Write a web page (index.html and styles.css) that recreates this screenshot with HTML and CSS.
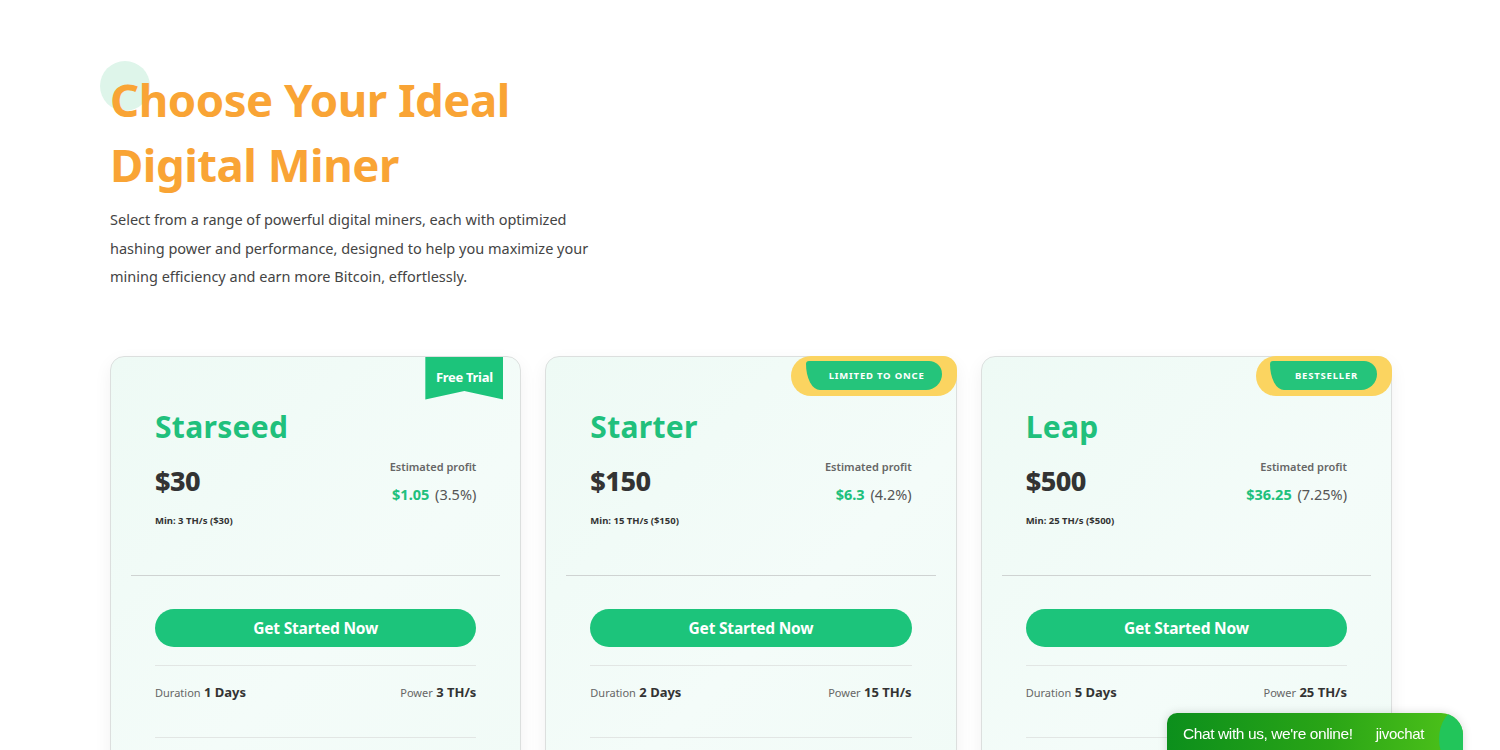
FILE: index.html
```html
<!DOCTYPE html>
<html lang="en">
<head>
<meta charset="utf-8">
<title>Choose Your Ideal Digital Miner</title>
<link rel="stylesheet" href="styles.css">
</head>
<body>
<section class="plans">
  <header class="intro">
    <span class="blob"></span>
    <h1 class="title">Choose Your Ideal<br>Digital Miner</h1>
    <p class="lead">Select from a range of powerful digital miners, each with optimized hashing power and performance, designed to help you maximize your mining efficiency and earn more Bitcoin, effortlessly.</p>
  </header>

  <div class="cards">
    <article class="card">
      <div class="ribbon">Free Trial</div>
      <div class="card-top">
        <h2 class="plan">Starseed</h2>
        <div class="figures">
          <div class="price-col">
            <div class="price">$30</div>
            <div class="min">Min: 3 TH/s ($30)</div>
          </div>
          <div class="profit-col">
            <div class="profit-label">Estimated profit</div>
            <div class="profit"><span class="amt">$1.05</span> <span class="pct">(3.5%)</span></div>
          </div>
        </div>
      </div>
      <hr class="divider">
      <div class="card-body">
        <a class="cta" href="#">Get Started Now</a>
        <div class="spec">
          <span><span class="k">Duration</span> <b>1 Days</b></span>
          <span><span class="k">Power</span> <b>3 TH/s</b></span>
        </div>
      </div>
    </article>

    <article class="card">
      <div class="badge"><span class="badge-in">LIMITED TO ONCE</span></div>
      <div class="card-top">
        <h2 class="plan">Starter</h2>
        <div class="figures">
          <div class="price-col">
            <div class="price">$150</div>
            <div class="min">Min: 15 TH/s ($150)</div>
          </div>
          <div class="profit-col">
            <div class="profit-label">Estimated profit</div>
            <div class="profit"><span class="amt">$6.3</span> <span class="pct">(4.2%)</span></div>
          </div>
        </div>
      </div>
      <hr class="divider">
      <div class="card-body">
        <a class="cta" href="#">Get Started Now</a>
        <div class="spec">
          <span><span class="k">Duration</span> <b>2 Days</b></span>
          <span><span class="k">Power</span> <b>15 TH/s</b></span>
        </div>
      </div>
    </article>

    <article class="card">
      <div class="badge badge-sm"><span class="badge-in">BESTSELLER</span></div>
      <div class="card-top">
        <h2 class="plan">Leap</h2>
        <div class="figures">
          <div class="price-col">
            <div class="price">$500</div>
            <div class="min">Min: 25 TH/s ($500)</div>
          </div>
          <div class="profit-col">
            <div class="profit-label">Estimated profit</div>
            <div class="profit"><span class="amt">$36.25</span> <span class="pct">(7.25%)</span></div>
          </div>
        </div>
      </div>
      <hr class="divider">
      <div class="card-body">
        <a class="cta" href="#">Get Started Now</a>
        <div class="spec">
          <span><span class="k">Duration</span> <b>5 Days</b></span>
          <span><span class="k">Power</span> <b>25 TH/s</b></span>
        </div>
      </div>
    </article>
  </div>
</section>

<div class="chat">
  <span class="chat-text">Chat with us, we're online!</span>
  <span class="chat-logo">jivochat</span>
  <span class="chat-corner"></span>
</div>
</body>
</html>
```

FILE: styles.css
```css
* { box-sizing: border-box; }
html, body { margin: 0; padding: 0; background: #fff; }
body {
  font-family: "Noto Sans", "Open Sans", sans-serif;
  color: #333;
  overflow: hidden;
  height: 750px;
}

.plans { padding: 67px 108px 0 110px; }

.intro { position: relative; }
.blob {
  position: absolute;
  left: -10px;
  top: -6px;
  width: 50px;
  height: 50px;
  border-radius: 50%;
  background: #def5ea;
  z-index: 0;
}
.title {
  position: relative;
  z-index: 1;
  margin: 0;
  font-family: "Noto Sans", sans-serif;
  font-weight: 700;
  font-size: 45.5px;
  line-height: 65px;
  color: #f9a435;
  letter-spacing: -0.5px;
}
.lead {
  margin: 8px 0 0;
  width: 490px;
  font-size: 14.5px;
  line-height: 28.5px;
  color: #444;
}

.cards {
  margin-top: 65px;
  display: grid;
  grid-template-columns: repeat(3, 1fr);
  gap: 24px;
}
.card {
  position: relative;
  height: 420px;
  border: 1px solid #dcdfde;
  border-radius: 14px;
  background: linear-gradient(135deg, #eefaf5 0%, #f4fcf9 60%, #f1fbf7 100%);
  box-shadow: 0 6px 18px rgba(0,0,0,0.06);
}
.card-top { padding: 48px 44px 0; }
.plan {
  margin: 0;
  font-size: 30px;
  line-height: 44px;
  font-weight: 700;
  color: #20c07c;
  letter-spacing: 0.3px;
}
.figures {
  display: flex;
  justify-content: space-between;
  margin-top: 10px;
}
.price {
  font-size: 27px;
  font-weight: 800;
  color: #333;
  line-height: 32px;
  margin-top: 6px;
  letter-spacing: -0.5px;
}
.min {
  margin-top: 17px;
  font-size: 9.5px;
  font-weight: 700;
  color: #333;
}
.profit-col { text-align: right; }
.profit-label {
  font-size: 11px;
  font-weight: 600;
  color: #666;
  line-height: 16px;
}
.profit { margin-top: 9px; font-size: 14.5px; line-height: 20px; }
.amt { color: #20c07c; font-weight: 700; }
.pct { color: #555; margin-left: 2px; }

.divider {
  margin: 48px 20px 0;
  border: 0;
  border-top: 1px solid #cfd3d2;
}
.card-body { padding: 0 44px; }
.cta {
  display: block;
  margin-top: 33px;
  height: 38px;
  border-radius: 19px;
  background: #1cc47b;
  color: #fff;
  text-align: center;
  line-height: 38px;
  font-weight: 700;
  font-size: 15.5px;
  text-decoration: none;
  letter-spacing: -0.2px;
}
.spec {
  margin-top: 18px;
  border-top: 1px solid #e2e6e4;
  border-bottom: 1px solid #e2e6e4;
  height: 73px;
  padding-top: 17px;
  display: flex;
  justify-content: space-between;
  align-items: flex-start;
  font-size: 13px;
}
.spec .k { color: #666; font-size: 11px; }
.spec b { color: #333; font-weight: 700; }

.ribbon {
  position: absolute;
  top: 0;
  right: 17px;
  width: 78px;
  height: 43px;
  background: #1cc47b;
  color: #fff;
  font-weight: 700;
  font-size: 13px;
  text-align: center;
  padding-top: 11px;
  letter-spacing: -0.3px;
  clip-path: polygon(0 0, 100% 0, 100% 100%, 50% 80%, 0 100%);
}

.badge {
  position: absolute;
  top: -1px;
  right: -1px;
  width: 166px;
  height: 40px;
  border-radius: 20px 14px 20px 20px;
  background: #fbd460;
  display: flex;
  justify-content: flex-end;
  align-items: center;
  padding-right: 15px;
}
.badge-sm { width: 136px; }
.badge-in {
  height: 29px;
  background: #25c47b;
  color: #fff;
  font-size: 9.5px;
  font-weight: 700;
  letter-spacing: 0.8px;
  white-space: nowrap;
  display: flex;
  align-items: center;
  justify-content: center;
  padding: 0 6px 0 12px;
  border-radius: 3px 13px 16px 14px / 3px 13px 16px 26px;
}
.badge:not(.badge-sm) .badge-in { width: 136px; }
.badge-sm .badge-in { width: 107px; }

.chat {
  position: fixed;
  left: 1167px;
  bottom: -10px;
  width: 296px;
  height: 47px;
  border-radius: 10px 22px 0 0;
  background: linear-gradient(90deg, #0c8f1c 0%, #2aa516 55%, #4fc31a 100%);
  color: #fff;
  font-family: "Liberation Sans", Arial, sans-serif;
  display: flex;
  align-items: flex-start;
  padding: 12px 0 0 16px;
  overflow: hidden;
  box-shadow: 0 0 10px rgba(0,0,0,0.15);
}
.chat-text { font-size: 15.5px; letter-spacing: -0.4px; }
.chat-logo { margin-left: 23px; font-size: 15px; letter-spacing: -0.3px; }
.chat-corner {
  position: absolute;
  right: -18px;
  top: -4px;
  width: 42px;
  height: 60px;
  border-radius: 50%;
  background: #22c55a;
}
```
